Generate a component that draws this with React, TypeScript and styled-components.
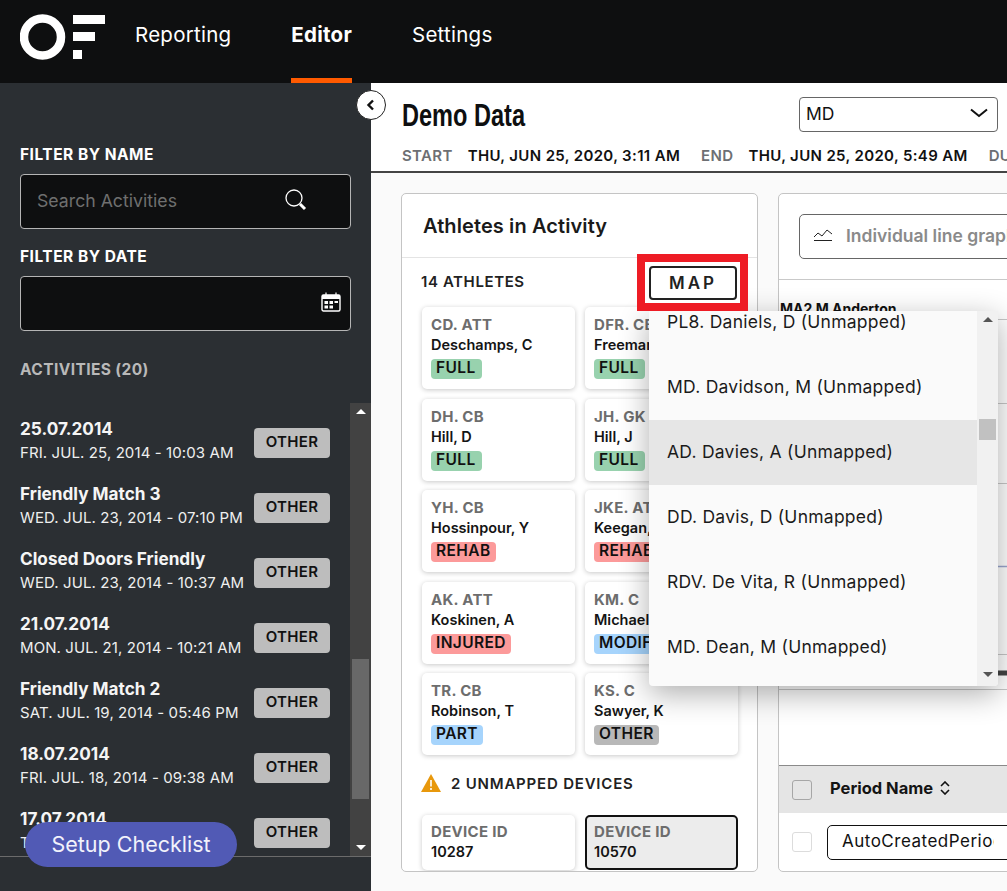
import React from "react";
import styled, { createGlobalStyle } from "styled-components";

const GlobalStyle = createGlobalStyle`
  html, body {
    margin: 0;
    padding: 0;
    height: 100%;
    overflow: hidden;
    background: #fafafa;
  }
  * {
    box-sizing: border-box;
  }
  body {
    font-family: Inter, "Noto Sans", sans-serif;
    color: #111;
  }
`;

const Page = styled.div`
  width: 1007px;
  height: 891px;
  display: flex;
  flex-direction: column;
  overflow: hidden;
  position: relative;
`;

const TopBar = styled.header`
  height: 83px;
  flex: none;
  background: #0e0f10;
  display: flex;
  align-items: stretch;
  padding-left: 20px;
`;

const Logo = styled.svg`
  width: 86px;
  height: 46px;
  margin-top: 14px;
`;

const NavItem = styled.a<{ $active?: boolean }>`
  margin-left: 60px;
  height: 83px;
  display: flex;
  align-items: center;
  padding-bottom: 9px;
  font-size: 20.5px;
  letter-spacing: 0.25px;
  font-weight: ${(p) => (p.$active ? 700 : 400)};
  color: #fff;
  border-bottom: 5px solid ${(p) => (p.$active ? "#ff5a00" : "transparent")};
  &:first-of-type {
    margin-left: 29px;
  }
`;

const Body = styled.div`
  flex: 1;
  display: flex;
  min-height: 0;
`;

const Sidebar = styled.aside`
  width: 371px;
  flex: none;
  background: #2b2f33;
  display: flex;
  flex-direction: column;
  position: relative;
`;

const Filters = styled.div`
  padding: 62px 20px 0;
  height: 320px;
  flex: none;
`;

const FilterLabel = styled.div`
  font-size: 15.5px;
  letter-spacing: 0.5px;
  line-height: 20px;
  font-weight: 700;
  color: #fff;
  margin-bottom: 9px;
`;

const FilterBox = styled.div`
  height: 55px;
  width: 331px;
  background: #0e0f10;
  border: 1px solid #b5b5b5;
  border-radius: 4px;
  margin-bottom: 18px;
  display: flex;
  align-items: center;
  padding: 0 9px 3px 16px;
  color: #6f6f6f;
  font-size: 17.7px;
`;

const SearchIcon = styled.svg`
  width: 24px;
  height: 24px;
  margin-left: auto;
  margin-right: 33px;
`;

const CalendarIcon = styled.svg`
  width: 20px;
  height: 20px;
  margin-left: auto;
`;

const ActivitiesTitle = styled.div`
  font-size: 15.5px;
  letter-spacing: 0.4px;
  line-height: 20px;
  font-weight: 700;
  color: #b9b9b9;
  margin-top: 29px;
`;

const ListArea = styled.div`
  flex: 1;
  min-height: 0;
  display: flex;
  border-bottom: 1px solid #6b6b6b;
`;

const ActivityList = styled.div`
  flex: 1;
  overflow: hidden;
`;

const ActivityRow = styled.div`
  height: 65px;
  padding: 14px 20px 0 20px;
  display: flex;
  justify-content: space-between;
`;

const ActivityName = styled.div`
  font-size: 17.2px;
  line-height: 24px;
  font-weight: 700;
  color: #f5f5f5;
  white-space: nowrap;
`;

const ActivityDate = styled.div`
  font-size: 15px;
  letter-spacing: 0.1px;
  line-height: 24px;
  color: #efefef;
  white-space: nowrap;
`;

const OtherChip = styled.div`
  width: 76px;
  height: 30px;
  margin-top: 11px;
  padding-bottom: 3px;
  background: #bdbdbd;
  border-radius: 4px;
  color: #111;
  font-size: 15px;
  font-weight: 600;
  letter-spacing: 0.3px;
  display: flex;
  align-items: center;
  justify-content: center;
`;

const ScrollTrack = styled.div`
  width: 21px;
  flex: none;
  background: #424242;
  display: flex;
  flex-direction: column;
  padding: 0 2px;
`;

const Arrow = styled.div<{ $up?: boolean; $color?: string }>`
  width: 0;
  height: 0;
  margin: 6px auto;
  border-left: 5px solid transparent;
  border-right: 5px solid transparent;
  ${(p) =>
    p.$up
      ? `border-bottom: 5px solid ${p.$color ?? "#fff"};`
      : `border-top: 5px solid ${p.$color ?? "#fff"};`}
`;

const ScrollThumb = styled.div`
  height: 140px;
  margin-top: auto;
  margin-bottom: 40px;
  background: #686868;
`;

const SidebarFooter = styled.div`
  height: 34px;
  flex: none;
`;

const SetupButton = styled.button`
  position: absolute;
  left: 25px;
  top: 739px;
  width: 212px;
  height: 45px;
  padding: 0 0 2px;
  border: none;
  border-radius: 23px;
  background: #515ab5;
  color: #f2f2fb;
  font-family: inherit;
  font-size: 21.5px;
`;

const CollapseButton = styled.button`
  position: absolute;
  left: 356px;
  top: 7px;
  width: 30px;
  height: 30px;
  border-radius: 50%;
  border: 1px solid #222;
  background: #fff;
  padding: 0;
  display: flex;
  align-items: center;
  justify-content: center;
  z-index: 3;
`;

const Main = styled.main`
  flex: 1;
  min-width: 0;
  display: flex;
  flex-direction: column;
  overflow: hidden;
  background: #fafafa;
`;

const MainHeader = styled.div`
  height: 90px;
  flex: none;
  background: #fff;
  border-bottom: 2px solid #444;
  padding: 14px 0 0 31px;
`;

const HeaderTop = styled.div`
  display: flex;
  justify-content: space-between;
  width: 596px;
`;

const PageTitle = styled.h1`
  margin: 0;
  font-family: "Liberation Sans", sans-serif;
  font-size: 31px;
  line-height: 38px;
  font-weight: 700;
  color: #0e0f10;
  white-space: nowrap;
  transform: scaleX(0.76);
  transform-origin: left center;
`;

const AthleteSelect = styled.div`
  width: 199px;
  height: 35px;
  border: 1px solid #666;
  border-radius: 4px;
  display: flex;
  align-items: center;
  justify-content: space-between;
  padding: 0 9px 3px 6px;
  font-size: 17.5px;
  color: #111;
`;

const MetaRow = styled.div`
  display: flex;
  margin-top: 11px;
  font-size: 15px;
  line-height: 20px;
  font-weight: 600;
  letter-spacing: 0.35px;
  white-space: nowrap;
`;

const MetaLabel = styled.span`
  color: #6d6f73;
  margin-right: 15px;
`;

const MetaValue = styled.span`
  color: #111;
  margin-right: 21px;
`;

const Columns = styled.div`
  flex: 1;
  min-height: 0;
  display: flex;
  gap: 20px;
  padding: 20px 0 19px 30px;
`;

const Panel = styled.section`
  width: 357px;
  flex: none;
  background: #fff;
  border: 1px solid #c4c4c4;
  border-radius: 5px;
  overflow: hidden;
`;

const PanelTitle = styled.h2`
  margin: 0;
  height: 64px;
  border-bottom: 1px solid #e4e4e4;
  padding: 0 21px;
  display: flex;
  align-items: center;
  font-size: 20px;
  letter-spacing: 0.1px;
  font-weight: 600;
  color: #1a1a1a;
`;

const CountRow = styled.div`
  height: 49px;
  padding-left: 19px;
  display: flex;
  align-items: center;
  padding-bottom: 2px;
  font-size: 15px;
  font-weight: 600;
  letter-spacing: 0.6px;
  color: #222;
`;

const AthleteGrid = styled.div<{ $row: number }>`
  display: grid;
  grid-template-columns: 153px 153px;
  grid-auto-rows: ${(p) => p.$row}px;
  column-gap: 10px;
  row-gap: 9.6px;
  padding-left: 20px;
`;

const AthleteCard = styled.div<{ $selected?: boolean }>`
  background: ${(p) => (p.$selected ? "#ececec" : "#fff")};
  border: ${(p) => (p.$selected ? "2px solid #111" : "none")};
  border-radius: 5px;
  padding: ${(p) => (p.$selected ? "6px 7px" : "8px 9px")};
  box-shadow: ${(p) => (p.$selected ? "none" : "0 1px 5px rgba(0,0,0,0.22)")};
`;

const DeviceCard = styled(AthleteCard)`
  padding-top: ${(p) => (p.$selected ? "5px" : "7px")};
`;

const Position = styled.div`
  font-size: 15px;
  line-height: 19px;
  font-weight: 700;
  color: #6d6d6d;
  letter-spacing: 0.3px;
  white-space: nowrap;
`;

const AthleteName = styled.div`
  font-size: 14.5px;
  line-height: 21px;
  font-weight: 600;
  color: #141414;
  white-space: nowrap;
`;

const StatusChip = styled.span<{ $bg: string }>`
  display: inline-block;
  background: ${(p) => p.$bg};
  border-radius: 4px;
  padding: 0 5px;
  margin-top: 4px;
  height: 20px;
  line-height: 18px;
  min-width: 51px;
  font-size: 15.5px;
  font-weight: 600;
  letter-spacing: 0.4px;
  color: #111;
  white-space: nowrap;
`;

const UnmappedRow = styled.div`
  height: 60px;
  padding: 0 0 4px 19px;
  display: flex;
  align-items: center;
  gap: 10px;
  font-size: 15px;
  font-weight: 600;
  letter-spacing: 0.8px;
  color: #222;
`;

const MapHighlight = styled.div`
  position: absolute;
  left: 637px;
  top: 254px;
  width: 111px;
  height: 57px;
  border: 8px solid #ee1c25;
  background: #fff;
  padding: 4px;
  z-index: 4;
`;

const MapButton = styled.div`
  height: 34px;
  border: 2px solid #222;
  border-radius: 4px;
  display: flex;
  align-items: center;
  justify-content: center;
  font-size: 17px;
  font-weight: 600;
  letter-spacing: 3px;
  color: #222;
  width: 88px;
`;

const WidePanel = styled(Panel)`
  width: 300px;
  margin-right: -71px;
  display: flex;
  flex-direction: column;
`;

const ChartToolbar = styled.div`
  height: 86px;
  flex: none;
  border-bottom: 1px solid #c9c9c9;
  padding: 20px 0 0 20px;
`;

const ChartSelect = styled.div`
  width: 320px;
  height: 45px;
  border: 1px solid #666;
  border-radius: 5px;
  display: flex;
  align-items: center;
  gap: 14px;
  padding: 0 0 3px 14px;
  font-size: 17.5px;
  font-weight: 600;
  color: #8a8a8a;
  white-space: nowrap;
`;

const ChartArea = styled.div`
  flex: 1;
  min-height: 0;
  position: relative;
  padding: 20px 0 0 1px;
  font-size: 14px;
  font-weight: 700;
  color: #111;
  white-space: nowrap;
`;

const ChartLines = styled.svg`
  position: absolute;
  left: 0;
  top: 0;
  width: 100%;
  height: 100%;
`;

const TableHead = styled.div`
  height: 48px;
  flex: none;
  background: #e5e5e5;
  border-top: 1px solid #8a8a8a;
  display: flex;
  align-items: center;
  padding: 0 0 3px 13px;
  gap: 18px;
  font-size: 16.5px;
  font-weight: 700;
  color: #141414;
  white-space: nowrap;
`;

const HeadCheck = styled.div`
  width: 20px;
  height: 20px;
  flex: none;
  margin-top: 3px;
  border: 1px solid #a6a6a6;
  border-radius: 3px;
`;

const SortIcon = styled.svg`
  width: 12px;
  height: 14px;
  margin-left: -12px;
`;

const TableRow = styled.div`
  height: 58px;
  flex: none;
  display: flex;
  align-items: center;
  padding-left: 13px;
  gap: 15px;
`;

const CheckBox = styled.div`
  width: 20px;
  height: 20px;
  flex: none;
  border: 1px solid #dcdcdc;
  border-radius: 3px;
`;

const NameInput = styled.div`
  width: 300px;
  height: 35px;
  border: 1px solid #111;
  border-radius: 5px;
  padding: 0 0 2px 14px;
  display: flex;
  align-items: center;
  font-size: 17px;
  letter-spacing: 0.5px;
  color: #111;
`;

const ClippedValue = styled.span`
  display: block;
  width: 152px;
  overflow: hidden;
  white-space: nowrap;
`;

const DeviceMenu = styled.div`
  position: absolute;
  left: 649px;
  top: 311px;
  width: 349px;
  height: 375px;
  display: flex;
  background: #fafafa;
  box-shadow: 0 8px 30px rgba(0, 0, 0, 0.32);
  border-radius: 0 0 4px 4px;
  overflow: hidden;
  z-index: 3;
`;

const MenuList = styled.div`
  flex: 1;
  margin-top: -21px;
`;

const MenuItem = styled.div<{ $active?: boolean }>`
  height: 65px;
  padding: 0 0 3px 18px;
  display: flex;
  align-items: center;
  font-size: 17.5px;
  letter-spacing: 0.25px;
  color: #1b1b1b;
  background: ${(p) => (p.$active ? "#e6e6e6" : "transparent")};
  white-space: nowrap;
`;

const MenuScroll = styled.div`
  width: 21px;
  flex: none;
  background: #f1f1f1;
  display: flex;
  flex-direction: column;
  padding-bottom: 3px;
`;

const MenuThumb = styled.div`
  width: 17px;
  height: 21px;
  margin: 91px 2px auto;
  background: #c1c1c1;
`;

const activities = [
  ["25.07.2014", "FRI. JUL. 25, 2014 - 10:03 AM"],
  ["Friendly Match 3", "WED. JUL. 23, 2014 - 07:10 PM"],
  ["Closed Doors Friendly", "WED. JUL. 23, 2014 - 10:37 AM"],
  ["21.07.2014", "MON. JUL. 21, 2014 - 10:21 AM"],
  ["Friendly Match 2", "SAT. JUL. 19, 2014 - 05:46 PM"],
  ["18.07.2014", "FRI. JUL. 18, 2014 - 09:38 AM"],
  ["17.07.2014", "THU. JUL. 17, 2014 - 10:12 AM"],
];

const statusColors: Record<string, string> = {
  FULL: "#98d2ae",
  REHAB: "#fc9a9a",
  INJURED: "#fc9a9a",
  MODIFIED: "#a6d4fc",
  PART: "#a6d4fc",
  OTHER: "#b8b8b8",
};

const athletes = [
  ["CD. ATT", "Deschamps, C", "FULL"],
  ["DFR. CB", "Freeman, D", "FULL"],
  ["DH. CB", "Hill, D", "FULL"],
  ["JH. GK", "Hill, J", "FULL"],
  ["YH. CB", "Hossinpour, Y", "REHAB"],
  ["JKE. ATT", "Keegan, J", "REHAB"],
  ["AK. ATT", "Koskinen, A", "INJURED"],
  ["KM. C", "Michael, K", "MODIFIED"],
  ["TR. CB", "Robinson, T", "PART"],
  ["KS. C", "Sawyer, K", "OTHER"],
];

const menuItems = [
  "PL8. Daniels, D (Unmapped)",
  "MD. Davidson, M (Unmapped)",
  "AD. Davies, A (Unmapped)",
  "DD. Davis, D (Unmapped)",
  "RDV. De Vita, R (Unmapped)",
  "MD. Dean, M (Unmapped)",
];

export default function App() {
  return (
    <Page>
      <GlobalStyle />
      <TopBar>
        <Logo viewBox="0 0 86 46">
          <circle cx="22.5" cy="23" r="18.5" fill="none" stroke="#fff" strokeWidth="8.5" />
          <rect x="53" y="1" width="32" height="9" fill="#fff" />
          <rect x="53" y="18" width="22" height="9" fill="#fff" />
          <rect x="53" y="36" width="9" height="9" fill="#fff" />
        </Logo>
        <NavItem>Reporting</NavItem>
        <NavItem $active>Editor</NavItem>
        <NavItem>Settings</NavItem>
      </TopBar>
      <Body>
        <Sidebar>
          <CollapseButton aria-label="Collapse">
            <svg width="12" height="12" viewBox="0 0 12 12">
              <path d="M8 1.5 3.5 6 8 10.5" fill="none" stroke="#111" strokeWidth="2.4" />
            </svg>
          </CollapseButton>
          <Filters>
            <FilterLabel>FILTER BY NAME</FilterLabel>
            <FilterBox>
              Search Activities
              <SearchIcon viewBox="0 0 24 24">
                <circle cx="10" cy="10" r="8" fill="none" stroke="#fff" strokeWidth="1.3" />
                <path d="M16 16l5 5" stroke="#fff" strokeWidth="3" />
              </SearchIcon>
            </FilterBox>
            <FilterLabel>FILTER BY DATE</FilterLabel>
            <FilterBox>
              <CalendarIcon viewBox="0 0 20 20">
                <rect x="1" y="3" width="18" height="16" rx="1.5" fill="none" stroke="#fff" strokeWidth="1.4" />
                <path d="M5 0.5v3M15 0.5v3" stroke="#fff" strokeWidth="1.2" />
                <rect x="1" y="3" width="18" height="4" fill="#fff" />
                <path d="M3.5 9h3.5v3H3.5zM8.5 9h3.5v3H8.5zM13.5 9h3.5v2h-3.5zM3.5 13.5h3.5v3H3.5zM8.5 13.5h3.5v3H8.5z" fill="#fff" />
              </CalendarIcon>
            </FilterBox>
            <ActivitiesTitle>ACTIVITIES (20)</ActivitiesTitle>
          </Filters>
          <ListArea>
            <ActivityList>
              {activities.map(([name, date]) => (
                <ActivityRow key={name}>
                  <div>
                    <ActivityName>{name}</ActivityName>
                    <ActivityDate>{date}</ActivityDate>
                  </div>
                  <OtherChip>OTHER</OtherChip>
                </ActivityRow>
              ))}
            </ActivityList>
            <ScrollTrack>
              <Arrow $up />
              <ScrollThumb />
              <Arrow />
            </ScrollTrack>
          </ListArea>
          <SidebarFooter />
          <SetupButton>Setup Checklist</SetupButton>
        </Sidebar>
        <Main>
          <MainHeader>
            <HeaderTop>
              <PageTitle>Demo Data</PageTitle>
              <AthleteSelect>
                MD
                <svg width="18" height="10" viewBox="0 0 18 10">
                  <path d="M1 1.5 9 8l8-6.5" fill="none" stroke="#111" strokeWidth="2" />
                </svg>
              </AthleteSelect>
            </HeaderTop>
            <MetaRow>
              <MetaLabel>START</MetaLabel>
              <MetaValue>THU, JUN 25, 2020, 3:11 AM</MetaValue>
              <MetaLabel>END</MetaLabel>
              <MetaValue>THU, JUN 25, 2020, 5:49 AM</MetaValue>
              <MetaLabel>DURATION</MetaLabel>
            </MetaRow>
          </MainHeader>
          <Columns>
            <Panel>
              <PanelTitle>Athletes in Activity</PanelTitle>
              <CountRow>14 ATHLETES</CountRow>
              <AthleteGrid $row={82}>
                {athletes.map(([pos, name, status]) => (
                  <AthleteCard key={pos}>
                    <Position>{pos}</Position>
                    <AthleteName>{name}</AthleteName>
                    <StatusChip $bg={statusColors[status]}>{status}</StatusChip>
                  </AthleteCard>
                ))}
              </AthleteGrid>
              <UnmappedRow>
                <svg width="20" height="20" viewBox="0 0 20 20">
                  <path d="M10 1 20 19H0z" fill="#e8980c" />
                  <path d="M10 7v6.5M10 15v2" stroke="#fff" strokeWidth="1.6" />
                </svg>
                2 UNMAPPED DEVICES
              </UnmappedRow>
              <AthleteGrid $row={55}>
                <DeviceCard>
                  <Position>DEVICE ID</Position>
                  <AthleteName>10287</AthleteName>
                </DeviceCard>
                <DeviceCard $selected>
                  <Position>DEVICE ID</Position>
                  <AthleteName>10570</AthleteName>
                </DeviceCard>
              </AthleteGrid>
            </Panel>
            <WidePanel>
              <ChartToolbar>
                <ChartSelect>
                  <svg width="18" height="12" viewBox="0 0 18 12">
                    <path d="M0 8l4-4 4 3 5-6 5 4" fill="none" stroke="#222" strokeWidth="1" />
                    <path d="M0 11.5h18" stroke="#222" strokeWidth="1.2" />
                  </svg>
                  Individual line graph
                </ChartSelect>
              </ChartToolbar>
              <ChartArea>
                <ChartLines>
                  <path d="M0 39.5h300M0 123.5h300M0 203.5h300M0 374.5h300M0 409.5h300" stroke="#c8c8c8" />
                  <path d="M0 286.5h300" stroke="#9aa6cf" strokeWidth="1.5" />
                  <path d="M200 393h100" stroke="#444" strokeWidth="5" />
                </ChartLines>
                MA2 M Anderton
              </ChartArea>
              <TableHead>
                <HeadCheck />
                Period Name
                <SortIcon viewBox="0 0 12 14">
                  <path d="M2 5l4-4 4 4M2 9l4 4 4-4" fill="none" stroke="#111" strokeWidth="1.6" />
                </SortIcon>
              </TableHead>
              <TableRow>
                <CheckBox />
                <NameInput>
                  <ClippedValue>AutoCreatedPeriod</ClippedValue>
                </NameInput>
              </TableRow>
            </WidePanel>
          </Columns>
        </Main>
      </Body>
      <MapHighlight>
        <MapButton>MAP</MapButton>
      </MapHighlight>
      <DeviceMenu>
        <MenuList>
          {menuItems.map((item, i) => (
            <MenuItem key={item} $active={i === 2}>
              {item}
            </MenuItem>
          ))}
        </MenuList>
        <MenuScroll>
          <Arrow $up $color="#555" />
          <MenuThumb />
          <Arrow $color="#555" />
        </MenuScroll>
      </DeviceMenu>
    </Page>
  );
}
